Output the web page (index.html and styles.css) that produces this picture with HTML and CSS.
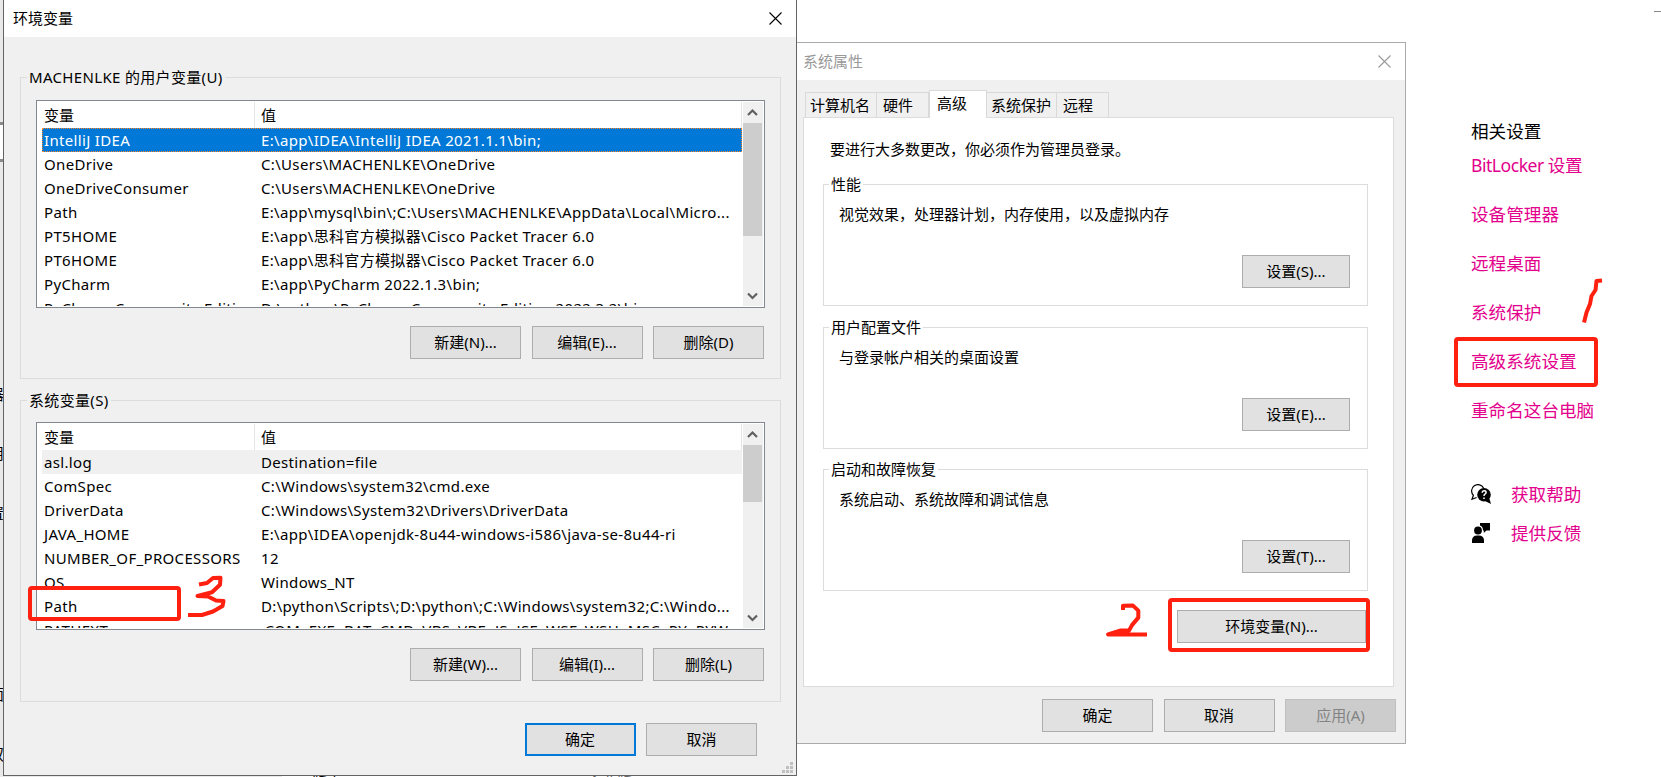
FILE: index.html
```
<!DOCTYPE html>
<html lang="zh-CN">
<head>
    <meta charset="UTF-8">
    <meta name="viewport" content="width=device-width, initial-scale=1.0">
    <title>环境变量</title>
    <link rel="stylesheet" href="styles.css">
</head>
<body>
    <div class="desktop">
        <!-- Settings page behind the dialogs -->
        <div class="nav-strip">
            <span class="nav-box"></span>
            <span class="nav-item n1">器</span>
            <span class="nav-item n2">用</span>
            <span class="nav-item n3">置</span>
            <span class="nav-item n4">面</span>
            <span class="nav-item n5">双</span>
        </div>
        <div class="page-bottom">
            <span>版本</span>
            <span class="faint">企业版</span>
        </div>
        <div class="window-min"></div>

        <aside class="related">
            <h2>相关设置</h2>
            <a class="tight">BitLocker 设置</a>
            <a>设备管理器</a>
            <a>远程桌面</a>
            <a>系统保护</a>
            <a>高级系统设置</a>
            <a>重命名这台电脑</a>
            <div class="support">
                <svg width="20" height="20" viewBox="0 0 20 20">
                    <path d="M12.6 4.2A6.3 6.3 0 1 0 2.4 11.3L1 15.3 5.6 13.5" fill="none" stroke="#000" stroke-width="1.2"/>
                    <circle cx="13" cy="10.8" r="6.8"/>
                    <path d="M14 17l6 3-1.8-6z"/>
                    <path d="M11.2 8.8q.2-2 2-2 1.900 0 1.900 1.700 0 1.100-1.200 1.700-.9.500-.9 1.700M13 13.400v1.500" fill="none" stroke="#fff" stroke-width="1.500"/>
                </svg>
                <a>获取帮助</a>
            </div>
            <div class="support">
                <svg width="20" height="20" viewBox="0 0 20 20">
                    <circle cx="7" cy="7.500" r="3.900"/>
                    <path d="M1 20v-3q.5-4.500 5-4.500h2q4.500 0 5 4.500v3z"/>
                    <path d="M9 0h10v7.500h-3.500L12.800 10V7.500H12Q12 3.500 9 2.500z"/>
                </svg>
                <a>提供反馈</a>
            </div>
        </aside>

        <!-- System properties -->
        <div class="window sysprops">
            <div class="titlebar inactive">
                <span>系统属性</span>
                <svg class="close" width="13" height="13" viewBox="0 0 13 13"><path d="M.5.5l12 12M12.500.5l-12 12"/></svg>
            </div>
            <div class="tabs">
                <div class="tab t1">计算机名</div>
                <div class="tab t2">硬件</div>
                <div class="tab t3 active">高级</div>
                <div class="tab t4">系统保护</div>
                <div class="tab t5">远程</div>
            </div>
            <div class="panel">
                <p class="intro">要进行大多数更改，你必须作为管理员登录。</p>
                <fieldset class="option">
                    <legend>性能</legend>
                    <p>视觉效果，处理器计划，内存使用，以及虚拟内存</p>
                    <button>设置(S)...</button>
                </fieldset>
                <fieldset class="option">
                    <legend>用户配置文件</legend>
                    <p>与登录帐户相关的桌面设置</p>
                    <button>设置(E)...</button>
                </fieldset>
                <fieldset class="option last">
                    <legend>启动和故障恢复</legend>
                    <p>系统启动、系统故障和调试信息</p>
                    <button>设置(T)...</button>
                </fieldset>
                <button class="env-button">环境变量(N)...</button>
            </div>
            <div class="buttons">
                <button>确定</button>
                <button>取消</button>
                <button disabled>应用(A)</button>
            </div>
        </div>

        <!-- Environment variables -->
        <div class="window envvars">
            <div class="titlebar">
                <span>环境变量</span>
                <svg class="close" width="13" height="13" viewBox="0 0 13 13"><path d="M.5.5l12 12M12.500.5l-12 12"/></svg>
            </div>

            <fieldset class="vars">
                <legend>MACHENLKE 的用户变量(U)</legend>
                <div class="list">
                    <div class="rows">
                        <div class="row head"><span>变量</span><span>值</span></div>
                        <div class="row selected"><span>IntelliJ IDEA</span><span>E:\app\IDEA\IntelliJ IDEA 2021.1.1\bin;</span></div>
                        <div class="row"><span>OneDrive</span><span>C:\Users\MACHENLKE\OneDrive</span></div>
                        <div class="row"><span>OneDriveConsumer</span><span>C:\Users\MACHENLKE\OneDrive</span></div>
                        <div class="row"><span>Path</span><span>E:\app\mysql\bin\;C:\Users\MACHENLKE\AppData\Local\Micro...</span></div>
                        <div class="row"><span>PT5HOME</span><span>E:\app\思科官方模拟器\Cisco Packet Tracer 6.0</span></div>
                        <div class="row"><span>PT6HOME</span><span>E:\app\思科官方模拟器\Cisco Packet Tracer 6.0</span></div>
                        <div class="row"><span>PyCharm</span><span>E:\app\PyCharm 2022.1.3\bin;</span></div>
                        <div class="row"><span>PyCharm Community Edition</span><span>D:\python\PyCharm Community Edition 2022.3.2\bin;</span></div>
                    </div>
                    <div class="scrollbar">
                        <svg width="20" height="21" viewBox="0 0 20 21"><path d="M5 13l4.500-4.500L14 13"/></svg>
                        <div class="thumb long"></div>
                        <svg width="20" height="21" viewBox="0 0 20 21"><path d="M5 8.500l4.500 4.500L14 8.500"/></svg>
                    </div>
                </div>
                <div class="buttons">
                    <button>新建(N)...</button>
                    <button>编辑(E)...</button>
                    <button>删除(D)</button>
                </div>
            </fieldset>

            <fieldset class="vars system">
                <legend>系统变量(S)</legend>
                <div class="list">
                    <div class="rows">
                        <div class="row head"><span>变量</span><span>值</span></div>
                        <div class="row hover"><span>asl.log</span><span>Destination=file</span></div>
                        <div class="row"><span>ComSpec</span><span>C:\Windows\system32\cmd.exe</span></div>
                        <div class="row"><span>DriverData</span><span>C:\Windows\System32\Drivers\DriverData</span></div>
                        <div class="row"><span>JAVA_HOME</span><span>E:\app\IDEA\openjdk-8u44-windows-i586\java-se-8u44-ri</span></div>
                        <div class="row"><span>NUMBER_OF_PROCESSORS</span><span>12</span></div>
                        <div class="row"><span>OS</span><span>Windows_NT</span></div>
                        <div class="row"><span>Path</span><span>D:\python\Scripts\;D:\python\;C:\Windows\system32;C:\Windo...</span></div>
                        <div class="row"><span>PATHEXT</span><span>.COM;.EXE;.BAT;.CMD;.VBS;.VBE;.JS;.JSE;.WSF;.WSH;.MSC;.PY;.PYW</span></div>
                    </div>
                    <div class="scrollbar">
                        <svg width="20" height="21" viewBox="0 0 20 21"><path d="M5 13l4.500-4.500L14 13"/></svg>
                        <div class="thumb"></div>
                        <svg width="20" height="21" viewBox="0 0 20 21"><path d="M5 8.500l4.500 4.500L14 8.500"/></svg>
                    </div>
                </div>
                <div class="buttons">
                    <button>新建(W)...</button>
                    <button>编辑(I)...</button>
                    <button>删除(L)</button>
                </div>
            </fieldset>

            <div class="buttons confirm">
                <button class="default">确定</button>
                <button>取消</button>
            </div>
            <svg class="grip" width="11" height="11" viewBox="0 0 11 11">
                <path d="M8 0h3v3H8zM4 4h3v3H4zM8 4h3v3H8zM0 8h3v3H0zM4 8h3v3H4zM8 8h3v3H8z"/>
            </svg>
        </div>

        <!-- Red marks for the three steps -->
        <svg class="marks" width="1661" height="777" viewBox="0 0 1661 777">
            <rect x="1456" y="339" width="140" height="46" rx="2"/>
            <rect x="1170" y="600" width="198" height="50" rx="2"/>
            <rect x="30" y="588" width="149" height="31" rx="2"/>
            <path d="M1602 280.500l-5.500.5-1 9-4 6-1.500 8-3.500 8.500-2.500 10"/>
            <path d="M1123 610v-4.200l10-.2 5.300 5v7l-6.300 7.500-3 5.500h-9l-12 3.900h39"/>
            <path d="M199 584.500l8-1.500 6-5 7.500-.2-.5 7-8 7.500-14.500 3.700 10.500.5 8 4 7.500.5-1 5-9.500 5.500-11 3.500h-14"/>
        </svg>
    </div>
</body>
</html>
```
FILE: styles.css
```
* {
    margin: 0;
    padding: 0;
    box-sizing: border-box;
}

body {
    background: #fff;
    color: #000;
    font-family: "Noto Sans", "Noto Sans CJK SC", sans-serif;
    font-size: 15px;
    overflow: hidden;
}

.desktop {
    position: relative;
    width: 1661px;
    height: 777px;
    overflow: hidden;
}

/* settings page */
.nav-strip {
    position: absolute;
    left: 0;
    top: 0;
    width: 282px;
    height: 777px;
    background: #e9e9e9;
}

.nav-box {
    position: absolute;
    left: 0;
    top: 122px;
    width: 10px;
    height: 40px;
    background: #fff;
    border: solid #8a8a8a;
    border-width: 3px 0;
}

.nav-item {
    position: absolute;
    left: -11px;
    line-height: 24px;
}

.n1 { top: 382px; }
.n2 { top: 441px; }
.n3 { top: 501px; }
.n4 { top: 682px; }
.n5 { top: 742px; }

.page-bottom {
    position: absolute;
    left: 312px;
    top: 772px;
    display: flex;
    gap: 245px;
    line-height: 20px;
}

.faint {
    color: #666;
}

.window-min {
    position: absolute;
    left: 1654px;
    top: 11px;
    width: 7px;
    height: 1px;
    background: #888;
}

.related {
    position: absolute;
    left: 1471px;
    top: 119px;
    display: flex;
    flex-direction: column;
    font-size: 17.6px;
    line-height: 24px;
    white-space: nowrap;
}

.related h2 {
    font-size: inherit;
    font-weight: normal;
    margin-bottom: 10px;
}

.related a {
    color: #e3008c;
    margin-bottom: 25px;
}

.related .tight {
    letter-spacing: -0.5px;
}

.support {
    display: flex;
    align-items: center;
    gap: 20px;
    height: 39px;
}

.related a:nth-of-type(6) {
    margin-bottom: 52px;
}

.related .support a {
    margin-bottom: 0;
}

/* windows */
.window {
    position: absolute;
    display: flex;
    flex-direction: column;
    background: #f0f0f0;
}

.titlebar {
    display: flex;
    align-items: center;
    justify-content: space-between;
    background: #fff;
    height: 37px;
    flex: none;
}

.titlebar span {
    padding-bottom: 2px;
}

.titlebar.inactive {
    color: #999;
}

.close {
    fill: none;
    stroke: #000;
    stroke-width: 1.1;
}

.inactive .close {
    stroke: #999;
}

button {
    width: 111px;
    height: 33px;
    padding-bottom: 2px;
    background: #e1e1e1;
    border: 1px solid #adadad;
    color: #000;
    font: inherit;
    line-height: 20px;
}

button:disabled {
    background: #ccc;
    border-color: #bfbfbf;
    color: #838383;
}

button.default {
    border: 2px solid #0078d7;
}

.buttons {
    display: flex;
    justify-content: flex-end;
    gap: 10.5px;
}

fieldset {
    border: 1px solid #dcdcdc;
    min-width: 0;
}

legend {
    line-height: 20px;
    padding: 0 2px;
}

.sysprops {
    left: 790px;
    top: 42px;
    width: 616px;
    height: 702px;
    border: 1px solid #aaa;
}

.sysprops .titlebar {
    padding: 0 14px 0 12px;
}

.sysprops > .buttons {
    margin: 12px 9px 0 0;
}

.tabs {
    display: flex;
    align-items: flex-end;
    height: 37px;
    padding-left: 14px;
}

.tab {
    height: 25px;
    border: 1px solid #d9d9d9;
    border-bottom: none;
    border-left: none;
    line-height: 24px;
    padding-left: 6px;
    white-space: nowrap;
}

.t1 {
    width: 72px;
    border-left: 1px solid #d9d9d9;
    padding-left: 4px;
}

.t2 { width: 52px; }

.tab.active {
    width: 58px;
    height: 28px;
    margin-bottom: -1px;
    background: #fff;
    border-left: 1px solid #d9d9d9;
    line-height: 24px;
    padding-left: 7px;
    z-index: 1;
}

.t4 {
    width: 70px;
    padding-left: 4px;
}

.t5 { width: 52px; }

.panel {
    width: 591px;
    height: 570px;
    margin-left: 12px;
    background: #fff;
    border: 1px solid #dcdcdc;
    padding: 21px 25px 0 19px;
}

.intro {
    padding-left: 7px;
    line-height: 20px;
    margin-bottom: 15px;
}

.option {
    height: 132px;
    margin-bottom: 11px;
    padding-left: 15px;
}

.option legend {
    margin-left: -10px;
}

.option p {
    line-height: 20px;
    margin-top: 10px;
}

.option button {
    display: block;
    width: 108px;
    margin: 31px 17px 0 auto;
}

.option.last {
    margin-top: -1px;
    margin-bottom: 19px;
}

.env-button {
    display: block;
    width: 189px;
    margin-left: auto;
    margin-right: 2px;
}

.envvars {
    left: 3px;
    top: -1px;
    width: 794px;
    height: 777px;
    border: 1px solid #646464;
}

.envvars .titlebar {
    padding: 0 14px 0 9px;
}

.vars {
    width: 761px;
    height: 312px;
    margin-left: 16px;
    padding: 0 15px;
}

.titlebar + .vars {
    margin-top: 30px;
    margin-bottom: 11px;
}

.vars legend {
    margin-left: -9px;
    letter-spacing: 0.33px;
}

.list {
    display: flex;
    height: 208px;
    margin-top: 13px;
    background: #fff;
    border: 1px solid #828790;
    padding: 1px 1px 1px 5px;
}

.system .list {
    margin-top: 12px;
}

.rows {
    width: 700px;
    overflow: hidden;
}

.row {
    display: grid;
    grid-template-columns: 212px 1fr;
    height: 24px;
    line-height: 24px;
    letter-spacing: 0.33px;
    white-space: nowrap;
}

.row span {
    padding-left: 2px;
}

.row span + span {
    padding-left: 7px;
}

.row.head {
    height: 26px;
    line-height: 26px;
    letter-spacing: 0;
    border-right: 1px solid #e5e5e5;
}

.head span + span {
    border-left: 1px solid #e5e5e5;
    padding-left: 6px;
}

.row.selected {
    background: #0078d7;
    color: #fff;
    outline: 1px dotted #ff8728;
    outline-offset: -1px;
}

.row.hover {
    background: #f0f0f0;
}

.scrollbar {
    display: flex;
    flex-direction: column;
    width: 20px;
    margin-left: 1px;
    background: #f0f0f0;
}

.scrollbar svg {
    fill: none;
    stroke: #606060;
    stroke-width: 2.2;
}

.scrollbar svg:last-child {
    margin-top: auto;
}

.thumb {
    width: 19px;
    height: 57px;
    background: #cdcdcd;
}

.thumb.long {
    height: 113px;
}

.vars .buttons {
    margin-top: 18px;
    padding-right: 1px;
}

.confirm {
    margin: 21px 39px 0 0;
}

.grip {
    margin: 6px 3px 0 auto;
    fill: #bfbfbf;
}

/* step marks */
.marks {
    position: absolute;
    left: 0;
    top: 0;
    fill: none;
    stroke: #ff2010;
    stroke-width: 4;
    stroke-linejoin: round;
}
```
